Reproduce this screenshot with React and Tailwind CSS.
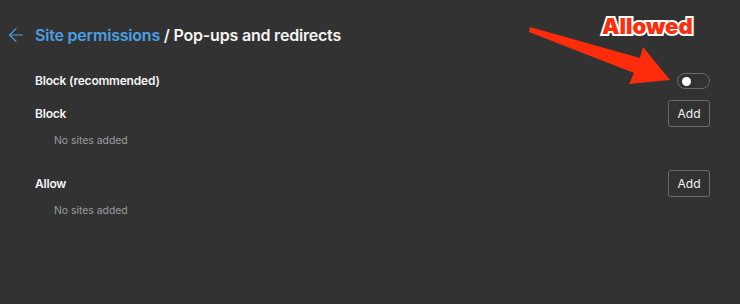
import { ArrowLeft } from "lucide-react";

const font = { fontFamily: "Inter, 'Liberation Sans', sans-serif" };

const AddButton = () => (
  <button className="h-[27px] w-[42px] rounded-[3px] border border-[#6a6a6a] text-[12px] leading-none text-[#f2f2f2]">
    Add
  </button>
);

const SiteList = ({ title }) => (
  <div className="flex flex-col">
    <div className="flex items-center justify-between">
      <h3 className="text-[12px] font-semibold leading-[18px] tracking-[-0.2px] text-[#f4f4f4]">{title}</h3>
      <AddButton />
    </div>
    <p className="pl-[19px] pt-[6px] text-[10.4px] leading-[15px] text-[#9b9b9b]">No sites added</p>
  </div>
);

export default function App() {
  return (
    <div className="relative h-[304px] w-[740px] overflow-hidden bg-[#323232]" style={font}>
      {/* header */}
      <div className="flex items-center gap-[8px] pl-[5px] pt-[23px]">
        <ArrowLeft size={22} strokeWidth={1.3} className="text-[#4a9fe3]" />
        <h1 className="text-[16px] font-semibold leading-[24px] tracking-[-0.2px] text-[#f4f4f4]">
          <span className="text-[#4a9fe3]">Site permissions</span> / Pop-ups and redirects
        </h1>
      </div>

      <div className="flex flex-col pl-[35px] pr-[30px] pt-[25px]">
        {/* toggle row */}
        <div className="flex h-[18px] items-center justify-between">
          <span className="text-[12px] font-semibold leading-[18px] tracking-[-0.2px] text-[#f4f4f4]">
            Block (recommended)
          </span>
          <div className="flex h-[16px] w-[33px] items-center rounded-full border border-[#6a6a6a] pl-[4px]">
            <span className="h-[9px] w-[9px] rounded-full bg-white" />
          </div>
        </div>

        <div className="mt-[10px]">
          <SiteList title="Block" />
        </div>
        <div className="mt-[22px]">
          <SiteList title="Allow" />
        </div>
      </div>

      {/* annotation */}
      <svg className="absolute left-0 top-0" width="740" height="304">
        <polygon
          points="530,27 640,58 643,47 670,80 629,84 634,73 529,32"
          fill="#fd2c0a"
        />
      </svg>
      <span className="absolute left-[602px] top-[12px] text-[22px] font-black leading-[28px] text-[#fd2c0a] [paint-order:stroke_fill] [-webkit-text-stroke:4px_#ffffff]">
        Allowed
      </span>
    </div>
  );
}
